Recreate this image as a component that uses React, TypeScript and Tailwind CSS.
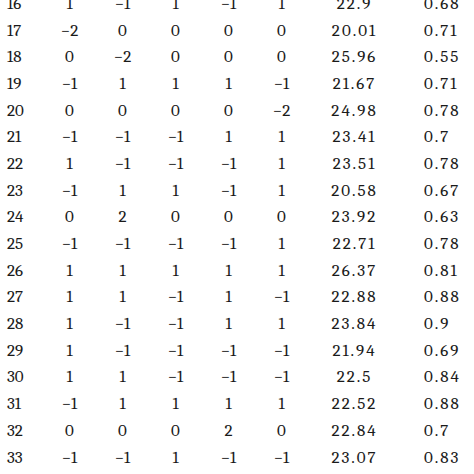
const rows: [string, string[], string, string][] = [
  ["16", ["1", "−1", "1", "−1", "1"], "22.9", "0.68"],
  ["17", ["−2", "0", "0", "0", "0"], "20.01", "0.71"],
  ["18", ["0", "−2", "0", "0", "0"], "25.96", "0.55"],
  ["19", ["−1", "1", "1", "1", "−1"], "21.67", "0.71"],
  ["20", ["0", "0", "0", "0", "−2"], "24.98", "0.78"],
  ["21", ["−1", "−1", "−1", "1", "1"], "23.41", "0.7"],
  ["22", ["1", "−1", "−1", "−1", "1"], "23.51", "0.78"],
  ["23", ["−1", "1", "1", "−1", "1"], "20.58", "0.67"],
  ["24", ["0", "2", "0", "0", "0"], "23.92", "0.63"],
  ["25", ["−1", "−1", "−1", "−1", "1"], "22.71", "0.78"],
  ["26", ["1", "1", "1", "1", "1"], "26.37", "0.81"],
  ["27", ["1", "1", "−1", "1", "−1"], "22.88", "0.88"],
  ["28", ["1", "−1", "−1", "1", "1"], "23.84", "0.9"],
  ["29", ["1", "−1", "−1", "−1", "−1"], "21.94", "0.69"],
  ["30", ["1", "1", "−1", "−1", "−1"], "22.5", "0.84"],
  ["31", ["−1", "1", "1", "1", "1"], "22.52", "0.88"],
  ["32", ["0", "0", "0", "2", "0"], "22.84", "0.7"],
  ["33", ["−1", "−1", "1", "−1", "−1"], "23.07", "0.83"],
]

export default function App() {
  return (
    <div className="w-[474px] h-[474px] overflow-hidden bg-white text-[#1a1a1a] font-serif text-[17px]">
      <div className="mt-[-10px]">
        {rows.map(([run, levels, y1, y2]) => (
          <div key={run} className="flex items-center h-[26.7px] leading-none whitespace-nowrap">
            <div className="w-[43px] shrink-0 pl-[7px]">{run}</div>
            {levels.map((v, i) => (
              <div key={i} className="w-[53px] shrink-0 text-center">{v}</div>
            ))}
            <div className="w-[91px] shrink-0 text-center tracking-[2px] pl-[2px]">{y1}</div>
            <div className="w-[87px] shrink-0 pl-[25px] tracking-[2px]">{y2}</div>
          </div>
        ))}
      </div>
    </div>
  )
}
